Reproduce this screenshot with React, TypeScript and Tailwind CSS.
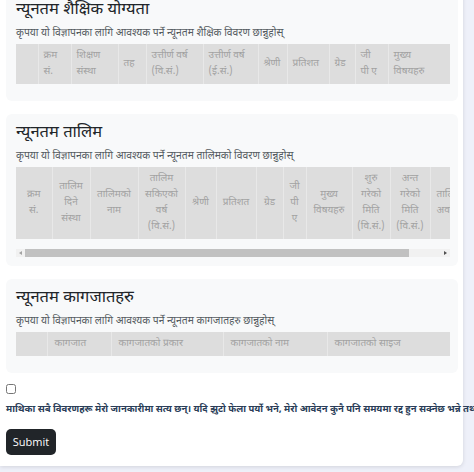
import React from "react";

const DEV = { fontFamily: '"Noto Sans Devanagari", "Noto Sans", "Liberation Sans", sans-serif' };

type Col = { label: string[]; w: number; left?: boolean };

const EDU_COLS: Col[] = [
  { label: [""], w: 22 },
  { label: ["क्रम", "सं."], w: 33 },
  { label: ["शिक्षण", "संस्था"], w: 47 },
  { label: ["तह"], w: 28 },
  { label: ["उत्तीर्ण वर्ष", "(वि.सं.)"], w: 57 },
  { label: ["उत्तीर्ण वर्ष", "(ई.सं.)"], w: 55 },
  { label: ["श्रेणी"], w: 29 },
  { label: ["प्रतिशत"], w: 42 },
  { label: ["ग्रेड"], w: 26 },
  { label: ["जी", "पी ए"], w: 33 },
  { label: ["मुख्य", "विषयहरु"], w: 62 },
];

const TRAINING_COLS: Col[] = [
  { label: ["क्रम", "सं."], w: 36 },
  { label: ["तालिम", "दिने", "संस्था"], w: 38 },
  { label: ["तालिमको", "नाम"], w: 48 },
  { label: ["तालिम", "सकिएको", "वर्ष", "(वि.सं.)"], w: 47 },
  { label: ["श्रेणी"], w: 31 },
  { label: ["प्रतिशत"], w: 40 },
  { label: ["ग्रेड"], w: 27 },
  { label: ["जी", "पी", "ए"], w: 23 },
  { label: ["मुख्य", "विषयहरु"], w: 46 },
  { label: ["शुरु", "गरेको", "मिति", "(वि.सं.)"], w: 38 },
  { label: ["अन्त", "गरेको", "मिति", "(वि.सं.)"], w: 40 },
  { label: ["तालिम", "अवधि"], w: 55, left: true },
];

const DOC_COLS: Col[] = [
  { label: [""], w: 31 },
  { label: ["कागजात"], w: 64 },
  { label: ["कागजातको प्रकार"], w: 112 },
  { label: ["कागजातको नाम"], w: 104 },
  { label: ["कागजातको साइज"], w: 123 },
];

function HeaderTable({ cols, pad }: { cols: Col[]; pad: string }) {
  const total = cols.reduce((s, c) => s + c.w, 0);
  return (
    <table className="table-fixed border-collapse shrink-0" style={{ width: total }}>
      <colgroup>
        {cols.map((c, i) => (
          <col key={i} style={{ width: c.w }} />
        ))}
      </colgroup>
      <thead>
        <tr>
          {cols.map((c, i) => (
            <th
              key={i}
              className={`bg-[#dddddd] border-l border-[#e8e8e8] first:border-l-0 align-middle font-normal text-[10px] leading-[16px] text-[#a2a2a2] whitespace-nowrap overflow-hidden ${pad} ${c.left ? "!text-left !pl-[6px]" : ""}`}
            >
              {c.label.map((l, j) => (
                <div key={j}>{l || "\u00a0"}</div>
              ))}
            </th>
          ))}
        </tr>
      </thead>
    </table>
  );
}

function Section({
  title,
  subtitle,
  pb = "pb-[17px]",
  children,
}: {
  title: string;
  subtitle: string;
  pb?: string;
  children: React.ReactNode;
}) {
  return (
    <section className={`bg-[#f8f9fa] rounded-md px-[10px] pt-[4px] ${pb}`}>
      <h2 className="text-[16.5px] leading-[30px] text-[#212529] font-normal">{title}</h2>
      <p className="text-[10.3px] leading-[18px] text-[#555b61] mb-[1px] whitespace-nowrap">{subtitle}</p>
      {children}
    </section>
  );
}

function FakeScrollbar() {
  return (
    <div className="mt-[10px] w-[434px] h-[8px] bg-[#f1f1f1] flex items-center">
      <div className="w-[9px] flex justify-center">
        <div className="w-0 h-0 border-y-[2px] border-y-transparent border-r-[3px] border-r-[#a3a3a3]" />
      </div>
      <div className="flex-1 h-full">
        <div className="h-full w-[384px] bg-[#c1c1c1]" />
      </div>
      <div className="w-[9px] flex justify-center">
        <div className="w-0 h-0 border-y-[2px] border-y-transparent border-l-[3px] border-l-[#505050]" />
      </div>
    </div>
  );
}

export default function App() {
  return (
    <div className="w-[474px] h-[472px] overflow-hidden bg-[#eef0f9]" style={DEV}>
      <div className="w-[463px] -mt-[9px] bg-white rounded-br-md shadow-[0_1px_4px_rgba(0,0,0,0.12)] pl-[6px] pr-[5px] pb-[11px]">
        <div className="flex flex-col gap-[13px]">
          <Section
            title="न्यूनतम शैक्षिक योग्यता"
            subtitle="कृपया यो विज्ञापनका लागि आवश्यक पर्ने न्यूनतम शैक्षिक विवरण छान्नुहोस्"
          >
            <HeaderTable cols={EDU_COLS} pad="text-left px-[5px] py-[4px]" />
          </Section>

          <Section
            title="न्यूनतम तालिम"
            subtitle="कृपया यो विज्ञापनका लागि आवश्यक पर्ने न्यूनतम तालिमको विवरण छान्नुहोस्"
            pb="pb-[9px]"
          >
            <div className="w-[434px] overflow-hidden">
              <HeaderTable cols={TRAINING_COLS} pad="text-center px-[3px] py-[4px]" />
            </div>
            <FakeScrollbar />
          </Section>

          <Section
            title="न्यूनतम कागजातहरु"
            subtitle="कृपया यो विज्ञापनका लागि आवश्यक पर्ने न्यूनतम कागजातहरु छान्नुहोस्"
          >
            <HeaderTable cols={DOC_COLS} pad="text-left px-[7px] py-[4px]" />
          </Section>
        </div>

        <div className="mt-[11px]">
          <input type="checkbox" className="block w-[10px] h-[10px] m-0" />
          <p className="mt-[7px] text-[9.5px] leading-[18px] font-bold text-[#2a3d58] whitespace-nowrap">
            माथिका सबै विवरणहरू मेरो जानकारीमा सत्य छन्। यदि झुटो फेला पर्यो भने, मेरो आवेदन कुनै पनि समयमा रद्द हुन सक्नेछ भन्ने तथ्य मलाई थाहा छ।
          </p>
          <button
            type="button"
            className="mt-[10px] w-[50px] h-[26px] rounded-[5px] bg-[#212529] text-white text-[11px]"
            style={{ fontFamily: '"Open Sans", "Noto Sans", sans-serif' }}
          >
            Submit
          </button>
        </div>
      </div>
    </div>
  );
}
